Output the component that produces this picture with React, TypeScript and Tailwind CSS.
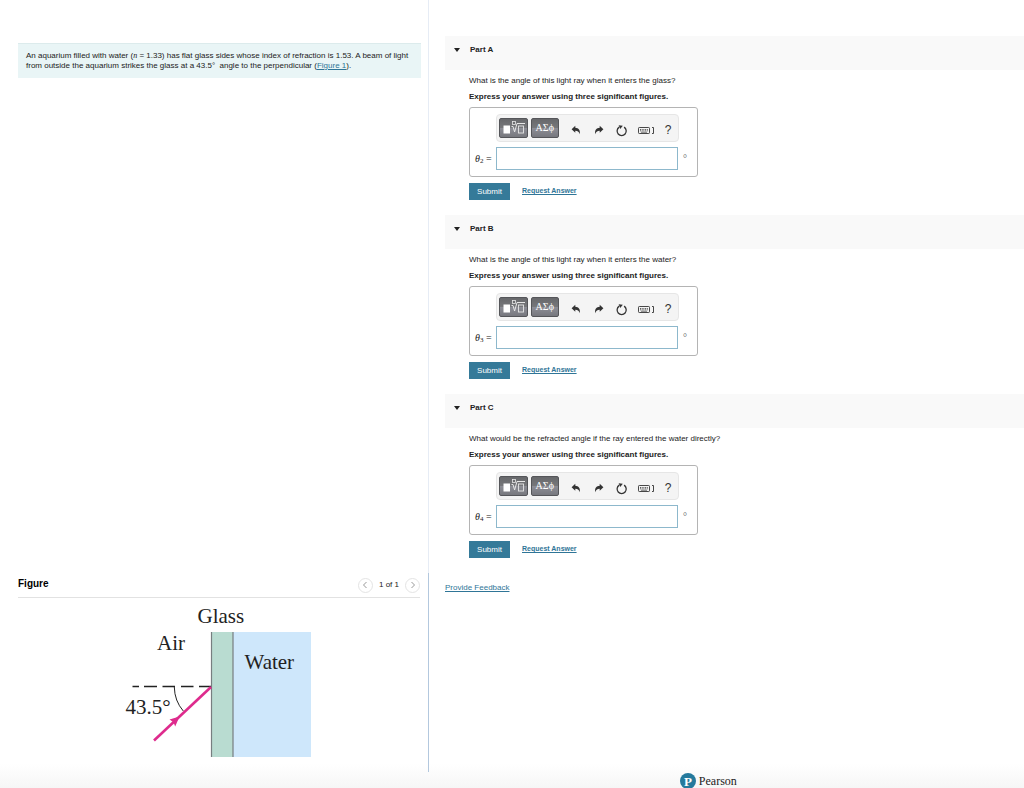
import React, { useState } from "react";

type Part = { id: string; title: string; question: string; sub: string };

const parts: Part[] = [
  { id: "a", title: "Part A", question: "What is the angle of this light ray when it enters the glass?", sub: "2" },
  { id: "b", title: "Part B", question: "What is the angle of this light ray when it enters the water?", sub: "3" },
  { id: "c", title: "Part C", question: "What would be the refracted angle if the ray entered the water directly?", sub: "4" },
];

const darkButton =
  "flex h-5 w-[29px] items-center justify-center rounded-[2px] border border-[#55565a] bg-[linear-gradient(#67686b_0%,#77787b_50%,#8d8e96_51%,#77787e_100%)] text-white";
const iconButton = "flex h-5 w-[23px] items-center justify-center text-[#333]";

function UndoIcon({ flipped = false }: { flipped?: boolean }) {
  return (
    <svg viewBox="0 0 10 10" className={flipped ? "h-[10px] w-[10px] -scale-x-100" : "h-[10px] w-[10px]"} aria-hidden="true">
      <path d="M0.6 4.2 4.3 0.8V2.7C7.6 2.8 9.3 5 8.9 9.2 8.1 6.9 6.9 5.9 4.3 5.8V7.7Z" fill="currentColor" />
    </svg>
  );
}

function Toolbar() {
  return (
    <div className="flex h-7 items-center rounded-[4px] border border-[#e6e6e6] bg-[#f4f4f4] pl-[2px]">
      <button type="button" aria-label="Templates" className={darkButton}>
        <svg viewBox="0 0 25 16" className="h-4 w-[25px] shrink-0" fill="none" stroke="#e6e6e6" aria-hidden="true">
          <rect x="2.5" y="5.5" width="6.5" height="8" fill="white" stroke="none" />
          <rect x="11.5" y="1.5" width="3" height="3" strokeWidth="0.8" />
          <path d="M10.5 6.5H12L13.6 12 16 3.5H24" strokeWidth="1" />
          <rect x="17.5" y="6" width="5" height="7" strokeWidth="0.9" />
        </svg>
      </button>
      <button
        type="button"
        aria-label="Greek symbols"
        className={`${darkButton} ml-[3px] font-['Liberation_Serif',serif] text-[10px] leading-[10px]`}
      >
        ΑΣϕ
      </button>
      <div className="ml-[5px] mt-1 flex">
        <button type="button" aria-label="Undo" className={iconButton}>
          <UndoIcon />
        </button>
        <button type="button" aria-label="Redo" className={iconButton}>
          <UndoIcon flipped />
        </button>
        <button type="button" aria-label="Reset" className={iconButton}>
          <svg viewBox="0 0 12 12" className="h-[13px] w-[13px]" fill="none" aria-hidden="true">
            <path d="M3.9 2.9A4.2 4.2 0 1 0 8.4 2.9" stroke="currentColor" strokeWidth="1.2" />
            <path d="M3.4 1.2 7.2 1.6 4.8 4.6Z" fill="currentColor" />
          </svg>
        </button>
        <button type="button" aria-label="Keyboard shortcuts" className="flex h-5 w-[25px] items-center justify-center text-[#333]">
          <svg viewBox="0 0 18 10" className="h-[10px] w-[18px] shrink-0" fill="none" stroke="currentColor" aria-hidden="true">
            <rect x="1.5" y="2.5" width="11" height="6" rx="0.8" strokeWidth="0.9" />
            <path d="M3 4.5H11.5M3 5.8H11.5" strokeWidth="0.8" strokeDasharray="1 0.7" />
            <path d="M4 7.2H10" strokeWidth="0.7" />
            <path d="M15 2.5H16.5V8.5H15" strokeWidth="0.9" />
          </svg>
        </button>
        <button type="button" aria-label="Help" className="flex h-5 w-5 items-center justify-center text-[12px] leading-[12px] text-[#333]">
          ?
        </button>
      </div>
    </div>
  );
}

function PartSection({ part }: { part: Part }) {
  const [open, setOpen] = useState(true);
  const inputId = `answer-${part.id}`;
  return (
    <section>
      <h2 className="bg-[#f9f9f9]">
        <button
          type="button"
          aria-expanded={open}
          onClick={() => setOpen(!open)}
          className="flex h-[34px] w-full items-center pb-[6px] pl-2 text-left text-[8px] font-bold text-[#222]"
        >
          <svg viewBox="0 0 8 4" className="mr-[9px] h-1 w-2" aria-hidden="true">
            <path d="M1 0H7L4 4Z" fill="#222" />
          </svg>
          {part.title}
        </button>
      </h2>
      {open && (
        <form className="pb-[15px] pl-6 pt-[6px]" onSubmit={(e) => e.preventDefault()}>
          <p className="leading-[10px]">{part.question}</p>
          <p className="mt-[6px] font-bold leading-[10px]">Express your answer using three significant figures.</p>
          <div className="mt-[5px] grid w-[229px] grid-cols-[26px_183px_1fr] items-center gap-y-[5px] rounded-[3px] border border-[#b4b4b4] py-[6px]">
            <div className="col-start-2">
              <Toolbar />
            </div>
            <label htmlFor={inputId} className="col-start-1 whitespace-nowrap pl-[5px] font-['Liberation_Serif',serif] text-[10px] leading-[10px]">
              <i>θ</i>
              <sub className="text-[7px] leading-[7px]">{part.sub}</sub> =
            </label>
            <input id={inputId} type="text" className="h-[23px] w-[182px] border border-[#8db8cc] bg-white px-1 text-[10px] outline-none" />
            <span className="pl-1 font-['Liberation_Serif',serif] text-[10px] leading-[10px] text-[#666]">°</span>
          </div>
          <div className="mt-[6px] flex items-center gap-3">
            <button type="submit" className="h-[17px] w-[41px] bg-[#357a99] text-[8px] font-medium text-white">
              Submit
            </button>
            <a href="#request" className="text-[7px] font-bold text-[#2f7597] underline">
              Request Answer
            </a>
          </div>
        </form>
      )}
    </section>
  );
}

function Diagram() {
  return (
    <svg viewBox="124 603 191 154" className="mx-auto h-[154px] w-[191px]" role="img" aria-label="Light ray striking the glass side of an aquarium">
      <rect x="211" y="632" width="22" height="125" fill="#b9dcd1" />
      <rect x="233" y="632" width="78" height="125" fill="#cee7fb" />
      <path d="M211.5 632V757M233 632V757" stroke="#777e80" strokeWidth="1.2" />
      <path d="M132.5 686.5H139M144 686.5H157M162.5 686.5H175M181 686.5H193.5M199 686.5H211" stroke="#222" strokeWidth="1.3" />
      <path d="M174.3 687Q174.6 701 183.3 711" fill="none" stroke="#222" />
      <path d="M154 740.5 211 687" stroke="#de2b8d" strokeWidth="2.6" />
      <path d="M179.5 716.5 169.5 719.5 173.5 722.2 175.2 726.5Z" fill="#de2b8d" />
      <g fill="#222" fontFamily="'Liberation Serif', serif" fontSize="21">
        <text x="197.5" y="623">Glass</text>
        <text x="157" y="650">Air</text>
        <text x="244.5" y="669">Water</text>
        <text x="125.5" y="714">43.5°</text>
      </g>
    </svg>
  );
}

const pager = "flex h-[15px] w-[15px] items-center justify-center rounded-full border border-[#e4e4e4] text-[#999]";

export default function App() {
  return (
    <div className="flex min-h-screen flex-col bg-[linear-gradient(to_top,#f6f6f6,white_24px)] font-['Liberation_Sans',Arial,sans-serif] text-[8px] text-[#222]">
      <main className="grid flex-1 grid-cols-[429fr_595fr]">
        <div className="flex flex-col">
          <div className="flex-1 border-r border-[#e6ecf5] pl-[18px] pr-[7px] pt-[43px]">
            <p className="border-t border-[#dcebec] bg-[#e9f5f6] pb-[7px] pl-2 pr-1 pt-[7px] leading-[10px]">
              An aquarium filled with water (<i className="font-['Liberation_Serif',serif]">n</i> = 1.33) has flat glass sides whose index of refraction is 1.53. A beam of light
              from outside the aquarium strikes the glass at a 43.5°&nbsp; angle to the perpendicular (
              <a href="#figure" className="text-[#2f7597] underline">Figure 1</a>).
            </p>
          </div>
          <section id="figure" className="border-r border-[#b3c8de] pb-[15px] pl-[18px] pr-2">
            <div className="mb-[5px] flex h-[25px] items-center justify-between border-b border-[#e2e2e2]">
              <h2 className="pb-1 text-[10px] font-bold text-black">Figure</h2>
              <div className="flex items-center gap-[6px]">
                <button type="button" aria-label="Previous figure" className={pager}>
                  <svg viewBox="0 0 6 8" className="h-2 w-[6px]" fill="none" stroke="currentColor" aria-hidden="true">
                    <path d="M4.5 1 1.5 4 4.5 7" />
                  </svg>
                </button>
                <span>1 of 1</span>
                <button type="button" aria-label="Next figure" className={pager}>
                  <svg viewBox="0 0 6 8" className="h-2 w-[6px]" fill="none" stroke="currentColor" aria-hidden="true">
                    <path d="M1.5 1 4.5 4 1.5 7" />
                  </svg>
                </button>
              </div>
            </div>
            <Diagram />
          </section>
        </div>
        <div className="pl-4 pt-9">
          {parts.map((part) => (
            <PartSection key={part.id} part={part} />
          ))}
          <a href="#feedback" className="mt-[10px] inline-block leading-[10px] text-[#2f7597] underline">
            Provide Feedback
          </a>
        </div>
      </main>
      <footer className="flex h-4 items-start overflow-hidden pl-[66%] pt-px">
        <div className="ml-1 flex items-center gap-[3px]">
          <svg viewBox="0 0 16 16" className="h-4 w-4" aria-hidden="true">
            <circle cx="8" cy="8" r="8" fill="#257a9d" />
            <text x="4" y="12.5" fill="white" fontFamily="'Liberation Serif', serif" fontWeight="bold" fontSize="13">P</text>
          </svg>
          <span className="font-['Liberation_Serif',serif] text-[12px] leading-4">Pearson</span>
        </div>
      </footer>
    </div>
  );
}
